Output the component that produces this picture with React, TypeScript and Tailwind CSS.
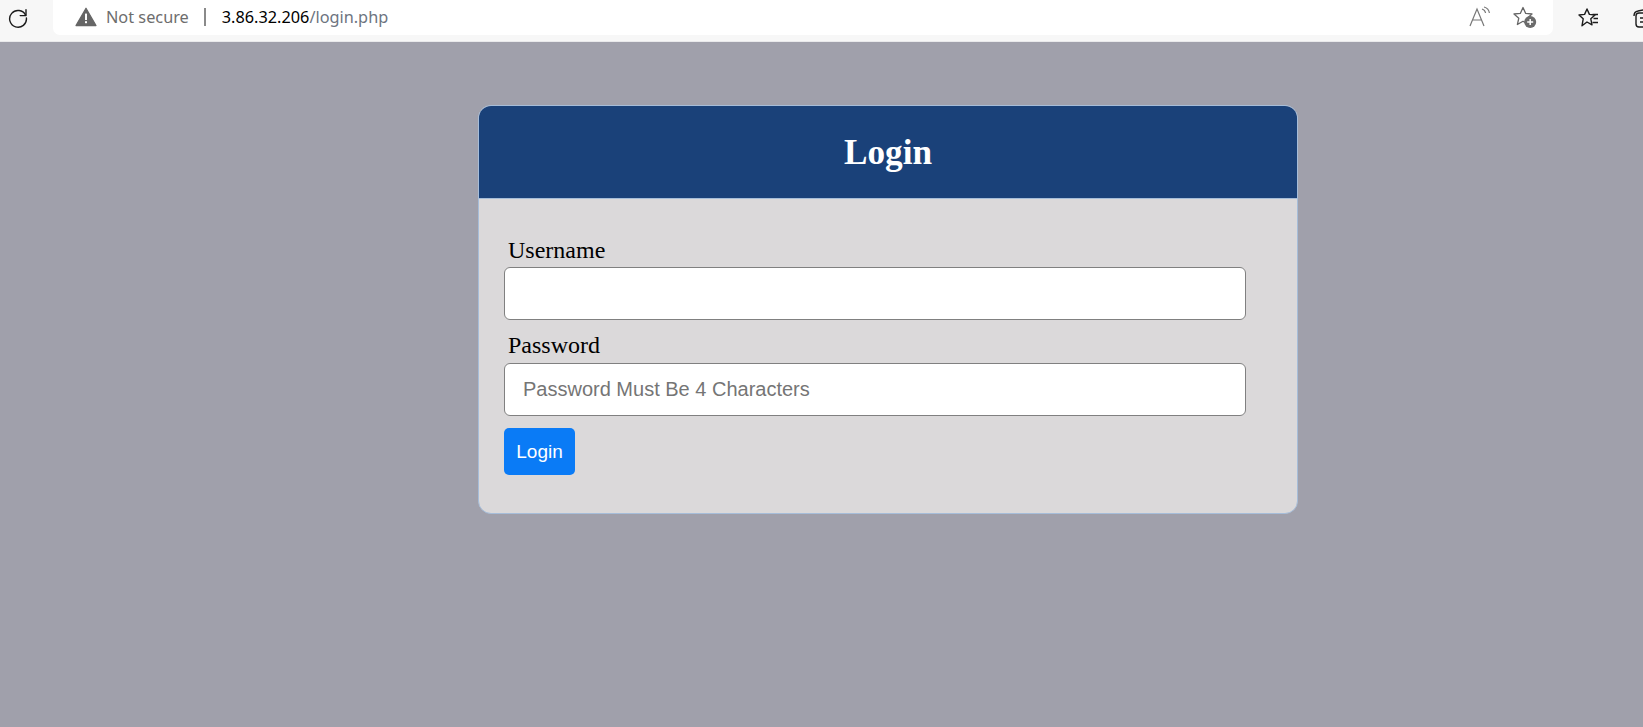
export default function App() {
  const serif = "font-['Liberation_Serif','Times_New_Roman',serif]";
  return (
    <div className="flex h-[727px] w-full flex-col overflow-hidden bg-[#a0a0ab]">
      <div className="flex h-[42px] w-full shrink-0 items-start overflow-hidden border-b border-[#e9e9eb] bg-[#f7f7f7]">
        <div className="flex h-[35px] w-[53px] shrink-0 items-center pl-[7px]">
          <svg width="22" height="22" viewBox="0 0 22 22" fill="none" stroke="#1c1c1c" strokeWidth="1.4">
            <path d="M18.6 8.2A8.4 8.4 0 1 0 19.4 11" strokeLinecap="round" />
            <path d="M19 2.8V8.6H13.2" strokeLinecap="round" strokeLinejoin="round" />
          </svg>
        </div>
        <div className="flex h-[35px] w-[1500px] shrink-0 items-center rounded-b-[7px] bg-white pb-[1px] pl-[22px] font-['Noto_Sans','Open_Sans',sans-serif] text-[16.3px]">
          <svg width="22" height="20" viewBox="0 0 22 20" className="mr-[9px] shrink-0">
            <path d="M11 1.2 21 18.6H1Z" fill="#666" stroke="#666" strokeWidth="1.2" strokeLinejoin="round" />
            <rect x="10" y="6.6" width="2" height="6.4" fill="#fff" />
            <rect x="10" y="14.2" width="2" height="2" fill="#fff" />
          </svg>
          <span className="text-[#6d6d6d]">Not secure</span>
          <span className="ml-[15px] h-[18px] w-[2px] bg-[#8a8a8a]" />
          <span className="ml-[16px] text-black">3.86.32.206</span>
          <span className="text-[#6d7480]">/login.php</span>
          <div className="ml-auto mr-[15px] flex items-center gap-[20px]">
            <svg width="24" height="22" viewBox="0 0 24 22" fill="none" stroke="#777" strokeWidth="1.2">
              <path d="M2 20 9 3l7 17M4.8 14h8.4" />
              <path d="M14 3c2 .6 3.2 2 3.6 4M16 1c3 .8 5 3 5.4 6" />
            </svg>
            <svg width="26" height="24" viewBox="0 0 26 24" fill="none">
              <path d="M11 2.5 13.7 8.4 20 9l-4.8 4.2 1.4 6.3L11 16.3 5.4 19.5l1.4-6.3L2 9l6.3-.6Z" stroke="#666" strokeWidth="1.3" strokeLinejoin="round" />
              <circle cx="18.2" cy="17" r="6" fill="#6b6b6b" />
              <path d="M18.2 14v6M15.2 17h6" stroke="#fff" strokeWidth="1.5" />
            </svg>
          </div>
        </div>
        <div className="flex h-[35px] shrink-0 items-center gap-[31px] pl-[24px]">
          <svg width="24" height="22" viewBox="0 0 24 22" fill="none" stroke="#1c1c1c" strokeWidth="1.4" className="shrink-0">
            <path d="M10 2 12.4 7.4 18 8l-4.2 3.8 1.2 6L10 15 5 18.8l1.2-7L2 8l5.6-.6Z" strokeLinejoin="round" />
            <path d="M15.5 7.5H21M16.5 11.5H21M15.5 15.5H21" />
          </svg>
          <svg width="22" height="22" viewBox="0 0 22 22" fill="none" stroke="#1c1c1c" strokeWidth="1.4" className="shrink-0">
            <path d="M2 9c0-3 1-4.5 4-5l7-1.5c2.5-.5 4 .5 4.5 2.5" />
            <rect x="4" y="6" width="16" height="14" rx="3" />
            <path d="M8 11h4M8 15h4" />
          </svg>
        </div>
      </div>

      <div className="ml-[478px] mt-[63px] w-[820px] overflow-hidden rounded-[13px] border border-[#a6bdd9] bg-[#dbd9da]">
        <div className={`flex h-[93px] items-center justify-center border-b border-[#a6bdd9] bg-[#1a4179] pt-[2px] text-[35.2px] font-bold text-white ${serif}`}>
          Login
        </div>
        <form className="px-[25px] pb-[38px] pt-[36px]">
          <label className={`block h-[32px] pl-[4px] text-[24px] leading-[30px] text-black ${serif}`}>Username</label>
          <input className="block h-[53px] w-[742px] rounded-[6px] border border-[#808080] bg-white px-[19px] font-['Liberation_Sans',Arial,sans-serif] text-[20px] outline-none" />
          <label className={`mt-[9px] block h-[34px] pl-[4px] text-[24px] leading-[32px] text-black ${serif}`}>Password</label>
          <input
            placeholder="Password Must Be 4 Characters"
            className="block h-[53px] w-[742px] rounded-[6px] border border-[#808080] bg-white px-[18px] font-['Liberation_Sans',Arial,sans-serif] text-[20px] outline-none placeholder:text-[#757575]"
          />
          <button type="button" className="mt-[12px] block h-[47px] w-[71px] rounded-[5px] bg-[#0a7bf6] pt-[2px] font-['Liberation_Sans',Arial,sans-serif] text-[19px] text-white">
            Login
          </button>
        </form>
      </div>
    </div>
  );
}
